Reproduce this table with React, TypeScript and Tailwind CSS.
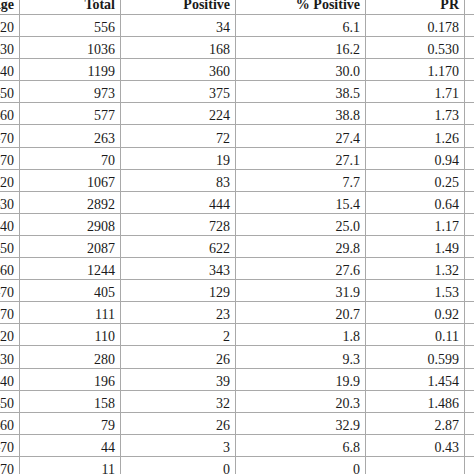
import React from "react";

const rows: string[][] = [
  ["≤20", "556", "34", "6.1", "0.178"],
  ["21–30", "1036", "168", "16.2", "0.530"],
  ["31–40", "1199", "360", "30.0", "1.170"],
  ["41–50", "973", "375", "38.5", "1.71"],
  ["51–60", "577", "224", "38.8", "1.73"],
  ["61–70", "263", "72", "27.4", "1.26"],
  [">70", "70", "19", "27.1", "0.94"],
  ["≤20", "1067", "83", "7.7", "0.25"],
  ["21–30", "2892", "444", "15.4", "0.64"],
  ["31–40", "2908", "728", "25.0", "1.17"],
  ["41–50", "2087", "622", "29.8", "1.49"],
  ["51–60", "1244", "343", "27.6", "1.32"],
  ["61–70", "405", "129", "31.9", "1.53"],
  [">70", "111", "23", "20.7", "0.92"],
  ["≤20", "110", "2", "1.8", "0.11"],
  ["21–30", "280", "26", "9.3", "0.599"],
  ["31–40", "196", "39", "19.9", "1.454"],
  ["41–50", "158", "32", "20.3", "1.486"],
  ["51–60", "79", "26", "32.9", "2.87"],
  ["61–70", "44", "3", "6.8", "0.43"],
  [">70", "11", "0", "0", ""],
];

const widths = ["w-[60px]", "w-[101px]", "w-[115px]", "w-[130px]", "w-[99px]"];

function Row({ cells, header }: { cells: string[]; header?: boolean }) {
  return (
    <div
      className={
        "flex shrink-0 border-b border-[#a9a9a9] " +
        (header ? "h-[15px] font-bold" : "h-[22.1px]")
      }
    >
      {cells.map((c, i) => (
        <div
          key={i}
          className={
            widths[i] +
            " shrink-0 flex items-end justify-end border-r border-[#a9a9a9] pr-[5px] leading-none whitespace-nowrap " +
            (header ? "pb-[2px]" : "pb-[1px]")
          }
        >
          {c}
        </div>
      ))}
      <div className="w-[40px] shrink-0" />
    </div>
  );
}

export default function App() {
  return (
    <div
      className="w-[474px] h-[474px] overflow-hidden bg-white text-[#1a1a1a] text-[14px]"
      style={{ fontFamily: '"Liberation Serif", "Times New Roman", serif' }}
    >
      <div className="flex flex-col -ml-[40px] w-[600px]">
        <Row cells={["Age", "Total", "Positive", "% Positive", "PR"]} header />
        {rows.map((r, i) => (
          <Row key={i} cells={r} />
        ))}
      </div>
    </div>
  );
}
